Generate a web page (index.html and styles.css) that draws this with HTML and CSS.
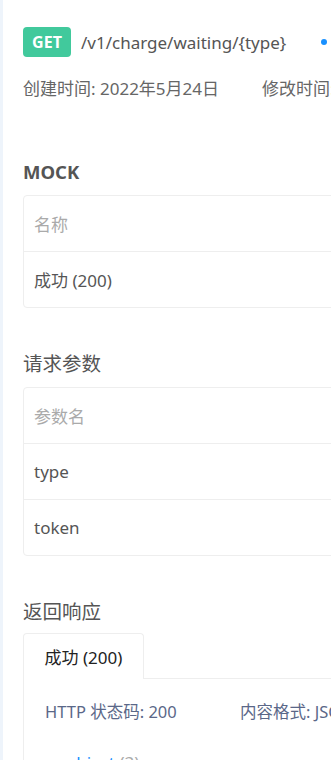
FILE: index.html
```html
<!DOCTYPE html>
<html lang="zh">
<head>
<meta charset="utf-8">
<link rel="stylesheet" href="styles.css">
</head>
<body>
<div class="page">
  <div class="header">
    <span class="method">GET</span>
    <span class="path">/v1/charge/waiting/{type}</span>
    <span class="dot"></span>
  </div>
  <div class="meta">
    <span class="meta-item">创建时间: 2022年5月24日</span>
    <span class="meta-item">修改时间: 2022年5月24日</span>
  </div>

  <h2 class="section-title bold">MOCK</h2>
  <div class="table">
    <div class="row head">名称</div>
    <div class="row">成功 (200)</div>
  </div>

  <h2 class="section-title">请求参数</h2>
  <div class="table">
    <div class="row head">参数名</div>
    <div class="row">type</div>
    <div class="row">token</div>
  </div>

  <h2 class="section-title">返回响应</h2>
  <div class="tabs">
    <div class="tab active">成功 (200)</div>
    <div class="tab-rest"></div>
  </div>
  <div class="tab-body">
    <div class="info">
      <span class="info-item">HTTP 状态码: 200</span>
      <span class="info-item">内容格式: JSON</span>
    </div>
    <div class="tree"><span class="type">object</span> <span class="count">(3)</span></div>
  </div>
</div>
</body>
</html>
```
FILE: styles.css
```css
html, body {
  margin: 0;
  padding: 0;
  background: #fff;
  overflow: hidden;
}
body {
  width: 331px;
  height: 760px;
  font-family: "Noto Sans", "Noto Sans CJK SC", sans-serif;
  color: #555;
  border-left: 3px solid #eef4fb;
  box-sizing: border-box;
}
.page {
  padding-left: 20px;
  width: 600px;
}
.header {
  display: flex;
  align-items: center;
  height: 30px;
  margin-top: 27px;
  white-space: nowrap;
}
.method {
  display: inline-flex;
  align-items: center;
  justify-content: center;
  width: 48px;
  height: 30px;
  border-radius: 4px;
  background: #41c99c;
  color: #fff;
  font-weight: 700;
  font-size: 16px;
}
.path {
  margin-left: 10px;
  font-size: 17px;
  color: #555;
}
.dot {
  width: 6px;
  height: 6px;
  border-radius: 50%;
  background: #1890ff;
  margin-left: 35px;
}
.meta {
  display: flex;
  gap: 43px;
  margin-top: 21px;
  height: 22px;
  line-height: 22px;
  font-size: 17px;
  color: #666;
  white-space: nowrap;
}
.section-title {
  margin: 0;
  font-weight: 400;
  font-size: 19.5px;
  line-height: 26px;
  color: #555;
}
.meta + .section-title {
  margin-top: 59px;
}
.section-title.bold {
  font-weight: 700;
  font-size: 18.5px;
}
.table {
  margin-top: 10px;
  border: 1px solid #eeeeee;
  border-radius: 4px;
  width: 500px;
}
.row {
  height: 55px;
  display: flex;
  align-items: center;
  padding-left: 10px;
  font-size: 17px;
  color: #555;
  border-top: 1px solid #eeeeee;
}
.row:first-child {
  border-top: none;
}
.row.head {
  color: #aaa;
}
.table + .section-title {
  margin-top: 43px;
}
.tabs {
  display: flex;
  margin-top: 8px;
}
.tab {
  width: 119px;
  height: 45px;
  border: 1px solid #eeeeee;
  border-bottom: none;
  border-radius: 4px 4px 0 0;
  display: flex;
  align-items: center;
  justify-content: center;
  font-size: 17px;
  color: #222;
}
.tab-rest {
  flex: 1;
  border-bottom: 1px solid #eeeeee;
}
.tab-body {
  border-left: 1px solid #eeeeee;
  padding-left: 21px;
  height: 200px;
}
.info {
  display: flex;
  gap: 40px;
  padding-top: 22px;
  height: 22px;
  line-height: 22px;
  font-size: 16.5px;
  color: #5a6788;
  white-space: nowrap;
}
.info-item:first-child {
  width: 155px;
}
.tree {
  margin-top: 29px;
  padding-left: 21px;
  font-size: 17px;
  line-height: 22px;
}
.type {
  color: #1890ff;
}
.count {
  color: #aaa;
}
```
